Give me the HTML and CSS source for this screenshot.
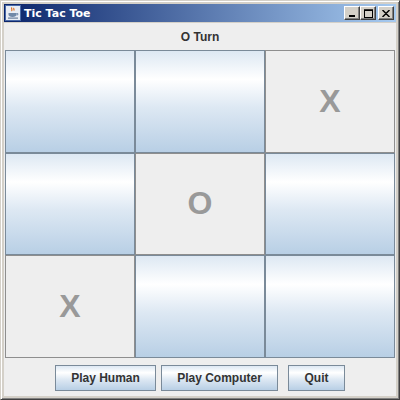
FILE: index.html
```html
<!DOCTYPE html>
<html lang="en">
<head>
<meta charset="utf-8">
<title>Tic Tac Toe</title>
<link rel="stylesheet" href="styles.css">
</head>
<body>
<div class="window">
    <div class="titlebar">
        <svg class="app-icon" width="16" height="16" viewBox="0 0 16 16">
            <rect x="0.5" y="0.5" width="15" height="15" fill="#e8ecf4" stroke="#4a6aa8"/>
            <path d="M7 2.5c-1.5 1 1 2 -0.5 3.5M9 3c-1 1 0.8 1.5 -0.3 2.5" stroke="#e07020" stroke-width="1.2" fill="none"/>
            <path d="M3.5 8h8v1.5c0 1.5-1.5 2.5-4 2.5s-4-1-4-2.5z" fill="#7088a8"/>
            <path d="M11.5 8.5h1.3v1.4h-1.3" stroke="#7088a8" fill="none"/>
            <rect x="3" y="12.5" width="10" height="1.2" fill="#6a7f9c"/>
        </svg>
        <span class="title">Tic Tac Toe</span>
        <div class="controls">
            <span class="ctl">
                <svg width="8" height="7" viewBox="0 0 8 7"><rect x="1" y="5" width="6" height="2" fill="#000"/></svg>
            </span>
            <span class="ctl">
                <svg width="9" height="9" viewBox="0 0 9 9"><rect x="0.5" y="1" width="8" height="7.5" fill="none" stroke="#000"/><rect x="0" y="0.5" width="9" height="1.5" fill="#000"/></svg>
            </span>
            <span class="ctl close">
                <svg width="8" height="7" viewBox="0 0 8 7"><path d="M0.5 0l3.5 3.5 3.5-3.5M0.5 7l3.5-3.5 3.5 3.5" stroke="#000" stroke-width="1.5" fill="none"/></svg>
            </span>
        </div>
    </div>
    <div class="content">
        <div class="status">O Turn</div>
        <div class="board">
            <button class="cell"></button>
            <button class="cell"></button>
            <button class="cell taken" disabled>X</button>
            <button class="cell"></button>
            <button class="cell taken" disabled>O</button>
            <button class="cell"></button>
            <button class="cell taken" disabled>X</button>
            <button class="cell"></button>
            <button class="cell"></button>
        </div>
        <div class="actions">
            <button class="action human">Play Human</button>
            <button class="action computer">Play Computer</button>
            <button class="action quit">Quit</button>
        </div>
    </div>
</div>
</body>
</html>
```

FILE: styles.css
```css
body {
    margin: 0;
    font-family: "Liberation Sans", Arial, sans-serif;
}

.window {
    box-sizing: border-box;
    width: 400px;
    height: 400px;
    display: flex;
    flex-direction: column;
    background-color: #d4d0c8;
    border: 1px solid;
    border-color: #d4d0c8 #404040 #404040 #d4d0c8;
    box-shadow: inset 1px 1px #ffffff, inset -1px -1px #808080;
    padding: 3px;
}

.titlebar {
    height: 18px;
    display: flex;
    align-items: center;
    background: linear-gradient(to right, #0a246a, #a6caf0);
    margin-bottom: 1px;
}

.app-icon {
    margin-left: 1px;
    flex: none;
}

.title {
    margin-left: 3px;
    color: #ffffff;
    font-family: "DejaVu Sans", sans-serif;
    font-weight: bold;
    font-size: 11px;
    flex: 1;
}

.controls {
    display: flex;
    margin-right: 2px;
}

.ctl {
    box-sizing: border-box;
    width: 16px;
    height: 14px;
    display: flex;
    align-items: center;
    justify-content: center;
    background-color: #d4d0c8;
    border: 1px solid;
    border-color: #ffffff #404040 #404040 #ffffff;
    box-shadow: inset -1px -1px #808080;
}

.ctl.close {
    margin-left: 2px;
}

.content {
    flex: 1;
    display: flex;
    flex-direction: column;
    background-color: #eeeeee;
}

.status {
    height: 27px;
    display: flex;
    align-items: center;
    justify-content: center;
    font-size: 12px;
    font-weight: bold;
    color: #333333;
}

.board {
    display: grid;
    grid-template-columns: repeat(3, 130px);
    grid-template-rows: repeat(3, 1fr);
    height: 308px;
    margin: 0 1px;
}

.cell {
    box-sizing: border-box;
    margin: 0;
    padding: 0;
    border: 1px solid #7a8a99;
    background: linear-gradient(to bottom, #dde8f3 0%, #ffffff 28%, #dde8f3 56%, #b8cfe5 100%);
    font-family: "Liberation Sans", Arial, sans-serif;
    font-weight: bold;
    font-size: 32px;
    color: #999999;
}

.cell.taken {
    background: #eeeeee;
    border-color: #8e8e8e;
}

.actions {
    flex: 1;
    display: flex;
    justify-content: center;
    align-items: flex-start;
    padding-top: 7px;
}

.action {
    box-sizing: border-box;
    height: 26px;
    margin: 0;
    padding: 0;
    border: 1px solid #7a8a99;
    background: linear-gradient(to bottom, #dde8f3 0%, #ffffff 28%, #dde8f3 56%, #b8cfe5 100%);
    font-family: "Liberation Sans", Arial, sans-serif;
    font-weight: bold;
    font-size: 12px;
    color: #333333;
}

.human {
    width: 101px;
}

.computer {
    width: 117px;
    margin-left: 5px;
}

.quit {
    width: 57px;
    margin-left: 10px;
}
```
